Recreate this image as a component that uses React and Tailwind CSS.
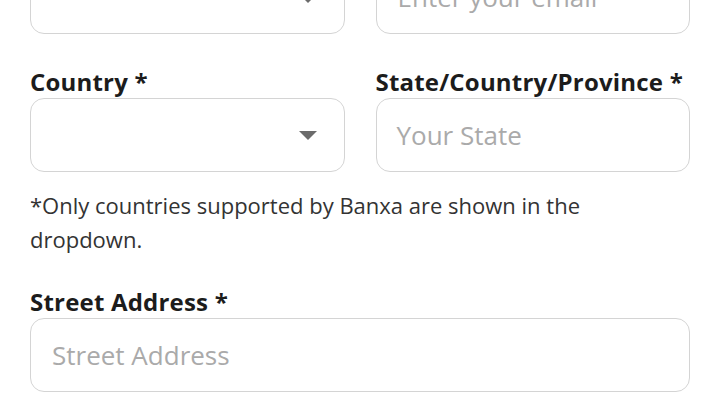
export default function App() {
  const font = { fontFamily: '"Open Sans", "Noto Sans", sans-serif' }

  return (
    <div className="w-[720px] h-[404px] overflow-hidden bg-white" style={font}>
      <div className="-mt-[40px] px-[30px]">
        {/* ── Top row (cut off) ── */}
        <div className="grid grid-cols-2 gap-[31px]">
          <div className="relative h-[74px] rounded-[14px] border border-[#d4d4d4]">
            <span className="absolute right-[27px] top-[33px] w-0 h-0 border-l-[9px] border-r-[9px] border-t-[9px] border-l-transparent border-r-transparent border-t-[#6b6b6b]" />
          </div>
          <div className="h-[74px] rounded-[14px] border border-[#d4d4d4] flex items-center px-[21px]">
            <span className="text-[26px] text-[#aaaaaa]">Enter your email</span>
          </div>
        </div>

        {/* ── Country / State ── */}
        <div className="grid grid-cols-2 gap-[31px] mt-[32px]">
          <div>
            <div className="h-[32px] flex items-center text-[24px] tracking-[0.2px] font-bold text-[#1c1c1c]">Country *</div>
            <div className="relative h-[74px] rounded-[14px] border border-[#d4d4d4]">
              <span className="absolute right-[27px] top-[32px] w-0 h-0 border-l-[9px] border-r-[9px] border-t-[9px] border-l-transparent border-r-transparent border-t-[#6b6b6b]" />
            </div>
          </div>
          <div>
            <div className="h-[32px] flex items-center text-[24px] tracking-[0.2px] font-bold text-[#1c1c1c] whitespace-nowrap">State/Country/Province *</div>
            <div className="h-[74px] rounded-[14px] border border-[#d4d4d4] flex items-center px-[20px]">
              <span className="text-[26px] text-[#aaaaaa]">Your State</span>
            </div>
          </div>
        </div>

        <p className="mt-[16px] text-[22px] leading-[34px] text-[#333333] pr-[80px]">
          *Only countries supported by Banxa are shown in the dropdown.
        </p>

        {/* ── Street Address ── */}
        <div className="mt-[30px]">
          <div className="h-[32px] flex items-center text-[24px] tracking-[0.2px] font-bold text-[#1c1c1c]">Street Address *</div>
          <div className="h-[74px] rounded-[14px] border border-[#d4d4d4] flex items-center px-[21px]">
            <span className="text-[26px] text-[#aaaaaa]">Street Address</span>
          </div>
        </div>
      </div>
    </div>
  )
}
